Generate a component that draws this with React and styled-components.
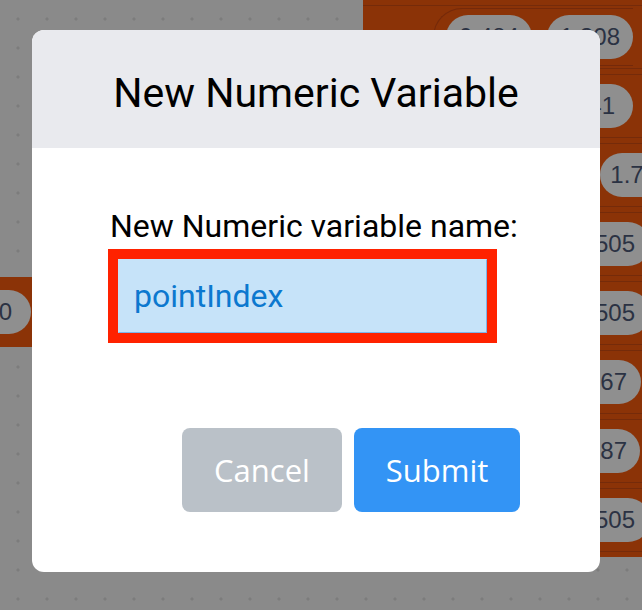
import React from "react";
import styled, { createGlobalStyle } from "styled-components";

const GlobalStyle = createGlobalStyle`
 html, body {
  margin: 0;
  padding: 0;
  overflow: hidden;
 }
 * {
  box-sizing: border-box;
 }
`;

const Workspace = styled.div`
 position: relative;
 width: 642px;
 height: 610px;
 overflow: hidden;
 background-color: #8a8a8a;
 background-image: radial-gradient(circle at 18px 19px, #7c7c7c 1.3px, transparent 1.8px);
 background-size: 29px 29px;
`;

const BlockStack = styled.div`
 position: absolute;
 left: 363px;
 top: 0;
 width: 279px;
 height: 557px;
 padding-top: 5px;
 background: #8b3307;
 display: flex;
 flex-direction: column;
 overflow: hidden;
`;

const BlockRow = styled.div`
 height: 64px;
 margin-bottom: 5px;
 display: flex;
 align-items: center;
 justify-content: flex-end;
 border-top: 1px solid #752b0a;
 border-bottom: 1px solid #752b0a;
 padding-right: ${(p) => p.$right}px;
`;

const Reporter = styled.div`
 display: flex;
 align-items: center;
 gap: 15px;
 padding: 6px 0 6px 12px;
 border: 1px solid #74290a;
 border-right: none;
 border-radius: 30px 0 0 30px;
`;

const Pill = styled.div`
 height: 44px;
 display: flex;
 align-items: center;
 padding: 0 ${(p) => p.$pad || 16}px;
 border-radius: 22px;
 background: #8f8f8f;
 color: #2b3243;
 font-family: "Liberation Sans", Arial, sans-serif;
 font-size: 24px;
 flex-shrink: 0;
`;

const LeftBlock = styled.div`
 position: absolute;
 left: -40px;
 top: 277px;
 width: 80px;
 height: 70px;
 background: #8b3307;
 display: flex;
 align-items: center;
`;

const LeftPill = styled(Pill)`
 width: 71px;
 justify-content: flex-end;
 padding-right: 19px;
`;

const Overlay = styled.div`
 position: absolute;
 inset: 0;
 padding: 30px 0 0 32px;
`;

const Dialog = styled.div`
 width: 568px;
 background: #ffffff;
 border-radius: 12px;
 overflow: hidden;
 display: flex;
 flex-direction: column;
`;

const Header = styled.div`
 height: 118px;
 padding-top: 40px;
 background: #e9eaee;
 display: flex;
 justify-content: center;
`;

const Title = styled.h2`
 margin: 0;
 font-family: Roboto, "Noto Sans", sans-serif;
 font-weight: 400;
 font-size: 41px;
 line-height: 47px;
 color: #000;
`;

const Body = styled.div`
 padding: 61px 80px 60px 78px;
 display: flex;
 flex-direction: column;
`;

const Label = styled.label`
 font-family: Roboto, "Noto Sans", sans-serif;
 font-size: 32px;
 line-height: 35px;
 color: #000;
`;

const NameInput = styled.input`
 width: 369px;
 height: 74px;
 margin: 15px 0 0 8px;
 padding: 0 15px;
 border: 1px solid;
 border-color: transparent #7db4ea #7db4ea transparent;
 outline: 10px solid #ff2200;
 background: #c6e3f9;
 color: #0c78cf;
 font-family: Roboto, "Noto Sans", sans-serif;
 font-size: 32px;
`;

const Actions = styled.div`
 margin-top: 95px;
 display: flex;
 justify-content: flex-end;
 gap: 12px;
`;

const Button = styled.button`
 height: 84px;
 width: ${(p) => p.$width}px;
 border: none;
 border-radius: 8px;
 background: ${(p) => (p.$primary ? "#3394f5" : "#bac1c8")};
 color: #ffffff;
 font-family: "Open Sans", "Noto Sans", sans-serif;
 font-size: 31px;
 cursor: pointer;
`;

const rows = [
 { right: 9 },
 { right: 9, text: "1.441", pad: 18 },
 { right: 0, text: "1.75", pad: 10, shift: -25 },
 { right: 0, text: "0.505", pad: 15, shift: -8 },
 { right: 0, text: "0.505", pad: 15, shift: -8 },
 { right: 1, text: "0.267", pad: 14 },
 { right: 2, text: "0.587", pad: 13 },
 { right: 0, text: "0.505", pad: 15, shift: -8 },
];

export default function App() {
 return (
  <>
   <GlobalStyle />
   <Workspace>
    <BlockStack>
     {rows.map((row, index) => {
      if (index === 0) {
       return (
        <BlockRow key={index} $right={row.right}>
         <Reporter>
          <Pill $pad={13}>0.484</Pill>
          <Pill $pad={13}>1.308</Pill>
         </Reporter>
        </BlockRow>
       );
      }
      return (
       <BlockRow key={index} $right={row.right}>
        <Pill $pad={row.pad} style={row.shift ? { marginRight: row.shift } : undefined}>
         {row.text}
        </Pill>
       </BlockRow>
      );
     })}
    </BlockStack>
    <LeftBlock>
     <LeftPill>0</LeftPill>
    </LeftBlock>

    <Overlay>
     <Dialog>
      <Header>
       <Title>New Numeric Variable</Title>
      </Header>
      <Body>
       <Label htmlFor="varName">New Numeric variable name:</Label>
       <NameInput id="varName" defaultValue="pointIndex" readOnly />
       <Actions>
        <Button $width={160}>Cancel</Button>
        <Button $width={166} $primary>
         Submit
        </Button>
       </Actions>
      </Body>
     </Dialog>
    </Overlay>
   </Workspace>
  </>
 );
}
